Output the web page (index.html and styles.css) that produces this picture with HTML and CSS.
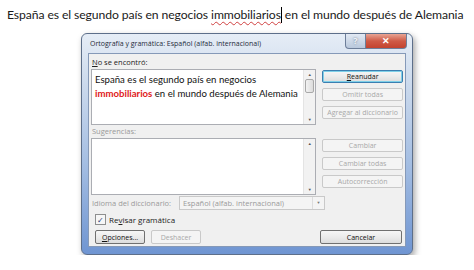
FILE: index.html
```html
<!DOCTYPE html>
<html lang="es">
<head>
    <meta charset="UTF-8">
    <title>Ortografía y gramática</title>
    <link rel="stylesheet" href="styles.css">
</head>
<body>

    <!-- Document line -->
    <div class="sentence">España es el segundo país en negocios <span class="misspelled">immobiliarios</span><span class="caret"></span> en el mundo después de Alemania</div>

    <!-- Spelling dialog -->
    <div class="dialog">
        <div class="titlebar">
            <span class="title">Ortografía y gramática: Español (alfab. internacional)</span>
            <div class="caption-buttons">
                <span class="cap-btn help">?</span>
                <span class="cap-btn close">✕</span>
            </div>
        </div>
        <div class="client">
            <div class="row">
                <div class="left">
                    <div class="label"><u>N</u>o se encontró:</div>
                    <div class="box found">
                        <div class="box-text">España es el segundo país en negocios<br><span class="bad">immobiliarios</span> en el mundo después de Alemania</div>
                        <div class="scrollbar">
                            <span class="arrow">▲</span>
                            <span class="thumb"></span>
                            <span class="arrow">▼</span>
                        </div>
                    </div>
                </div>
                <div class="right first">
                    <button class="btn default"><u>R</u>eanudar</button>
                    <button class="btn" disabled>Omitir todas</button>
                    <button class="btn" disabled>Agregar al diccionario</button>
                </div>
            </div>

            <div class="row">
                <div class="left">
                    <div class="label dim">Sugerencias:</div>
                    <div class="box suggest">
                        <div class="box-text"></div>
                        <div class="scrollbar">
                            <span class="arrow">▲</span>
                            <span class="track"></span>
                            <span class="arrow">▼</span>
                        </div>
                    </div>
                </div>
                <div class="right second">
                    <button class="btn" disabled>Cambiar</button>
                    <button class="btn" disabled>Cambiar todas</button>
                    <button class="btn" disabled>Autocorrección</button>
                </div>
            </div>

            <div class="lang">
                <span class="dim">Idioma del diccionario:</span>
                <div class="select">
                    <span>Español (alfab. internacional)</span>
                    <span class="drop">▼</span>
                </div>
            </div>

            <div class="check">
                <span class="checkbox">✓</span>
                <span>Re<u>v</u>isar gramática</span>
            </div>

            <div class="bottom">
                <div class="bottom-left">
                    <button class="btn small"><u>O</u>pciones...</button>
                    <button class="btn small" disabled>Deshacer</button>
                </div>
                <button class="btn cancel">Cancelar</button>
            </div>
        </div>
    </div>

</body>
</html>
```

FILE: styles.css
```css
body {
    margin: 0;
    padding: 0;
    background: #ffffff;
    font-family: Lato, "Open Sans", sans-serif;
}
/* Document line */
.sentence {
    padding: 7px 0 0 7px;
    height: 26px;
    font-size: 12.2px;
    letter-spacing: -0.1px;
    color: #1a1a1a;
    white-space: nowrap;
}
.misspelled {
    text-decoration: underline wavy #d04040;
    text-decoration-thickness: 1px;
    text-underline-offset: 2px;
}
.caret {
    display: inline-block;
    width: 1px;
    height: 16px;
    background: #000;
    vertical-align: -4px;
}
/* Dialog frame */
.dialog {
    margin-left: 81px;
    width: 318px;
    height: 214px;
    padding: 0 6px 6px 6px;
    border: 1px solid #5d6f8a;
    border-radius: 6px;
    background: linear-gradient(#e6edf6, #c9d8ec 25%, #a3bde2 60%, #6f95d2);
    box-shadow: 2px 3px 6px rgba(0, 0, 0, 0.35);
    font-family: "Open Sans", "Noto Sans", sans-serif;
    font-size: 7.5px;
    color: #222;
}
.titlebar {
    height: 19px;
    display: flex;
    justify-content: space-between;
    align-items: flex-start;
}
.title {
    padding: 5px 0 0 2px;
    font-size: 7px;
    color: #1e2a3a;
}
.caption-buttons {
    display: flex;
    margin-right: -1px;
}
.cap-btn {
    height: 14px;
    line-height: 14px;
    text-align: center;
    color: #fff;
    font-size: 9px;
    font-weight: bold;
    border: 1px solid #6d7e99;
    border-top: none;
}
.help {
    width: 19px;
    background: linear-gradient(#e2e9f3, #b9c8dc);
    color: #f4f6fa;
    text-shadow: 0 0 2px #55657e;
    border-radius: 0 0 0 4px;
}
.close {
    width: 40px;
    background: linear-gradient(#e8a493, #cf5a46 50%, #c3432f);
    border-left: none;
    border-radius: 0 0 4px 0;
}
/* Client area */
.client {
    height: 194px;
    background: #f0f0f0;
    border: 1px solid #8599b8;
    padding: 2px 2px 0 2px;
    box-sizing: border-box;
}
.row {
    display: flex;
    gap: 6px;
}
.left {
    width: 229px;
}
.right {
    width: 82px;
    display: flex;
    flex-direction: column;
    gap: 5px;
}
.right.first {
    padding-top: 14px;
}
.right.second {
    padding-top: 14px;
}
.label {
    height: 13px;
    line-height: 13px;
    padding-left: 1px;
}
.dim {
    color: #9a9a9a;
}
.box {
    display: flex;
    background: #fff;
    border: 1px solid #abadb3;
}
.found {
    height: 54px;
}
.suggest {
    height: 55px;
}
.box-text {
    flex: 1;
    padding: 3px 3px;
    font-family: Lato, "Open Sans", sans-serif;
    font-size: 9.6px;
    line-height: 14px;
    color: #111;
    white-space: nowrap;
    overflow: hidden;
}
.bad {
    color: #e02020;
    font-weight: bold;
}
.scrollbar {
    width: 11px;
    display: flex;
    flex-direction: column;
    align-items: center;
    justify-content: space-between;
    background: #f2f2f2;
    border-left: 1px solid #e4e4e4;
}
.arrow {
    font-size: 4px;
    line-height: 9px;
    color: #555;
}
.thumb {
    width: 9px;
    height: 14px;
    margin-bottom: auto;
    background: linear-gradient(90deg, #f2f2f2, #dcdcdc);
    border: 1px solid #a9a9a9;
    border-radius: 2px;
    box-sizing: border-box;
}
.track {
    flex: 1;
}
/* Buttons */
.btn {
    height: 13px;
    padding: 0;
    font-family: "Open Sans", "Noto Sans", sans-serif;
    font-size: 7px;
    line-height: 11px;
    white-space: nowrap;
    color: #111;
    background: linear-gradient(#f6f6f6, #ebebeb 50%, #dcdcdc);
    border: 1px solid #707070;
    border-radius: 2px;
    box-sizing: border-box;
}
.btn:disabled {
    color: #a8a8a8;
    background: #f4f4f4;
    border-color: #c9c9c9;
}
.btn.default {
    border-color: #3c7fb1;
    box-shadow: inset 0 0 0 1px #7fd0e8;
}
/* Language and check */
.lang {
    display: flex;
    align-items: center;
    gap: 8px;
    margin-top: 1px;
    padding-left: 1px;
}
.select {
    width: 146px;
    height: 14px;
    display: flex;
    justify-content: space-between;
    align-items: center;
    padding-left: 3px;
    color: #9a9a9a;
    background: #f4f4f4;
    border: 1px solid #c9c9c9;
    box-sizing: border-box;
}
.drop {
    width: 11px;
    height: 12px;
    line-height: 12px;
    text-align: center;
    font-size: 4px;
    color: #777;
    border-left: 1px solid #ddd;
}
.check {
    display: flex;
    align-items: center;
    gap: 3px;
    margin-top: 4px;
    padding-left: 4px;
    font-size: 8px;
}
.checkbox {
    width: 9px;
    height: 9px;
    line-height: 9px;
    text-align: center;
    font-size: 8px;
    color: #2a3f7a;
    background: #f6f6f6;
    border: 1px solid #8e8f8f;
}
.bottom {
    display: flex;
    justify-content: space-between;
    margin-top: 5px;
}
.bottom-left {
    display: flex;
    gap: 6px;
    padding-left: 4px;
}
.btn.small {
    width: 50px;
    height: 14px;
}
.btn.cancel {
    width: 82px;
    height: 14px;
    margin-right: 1px;
}
```
